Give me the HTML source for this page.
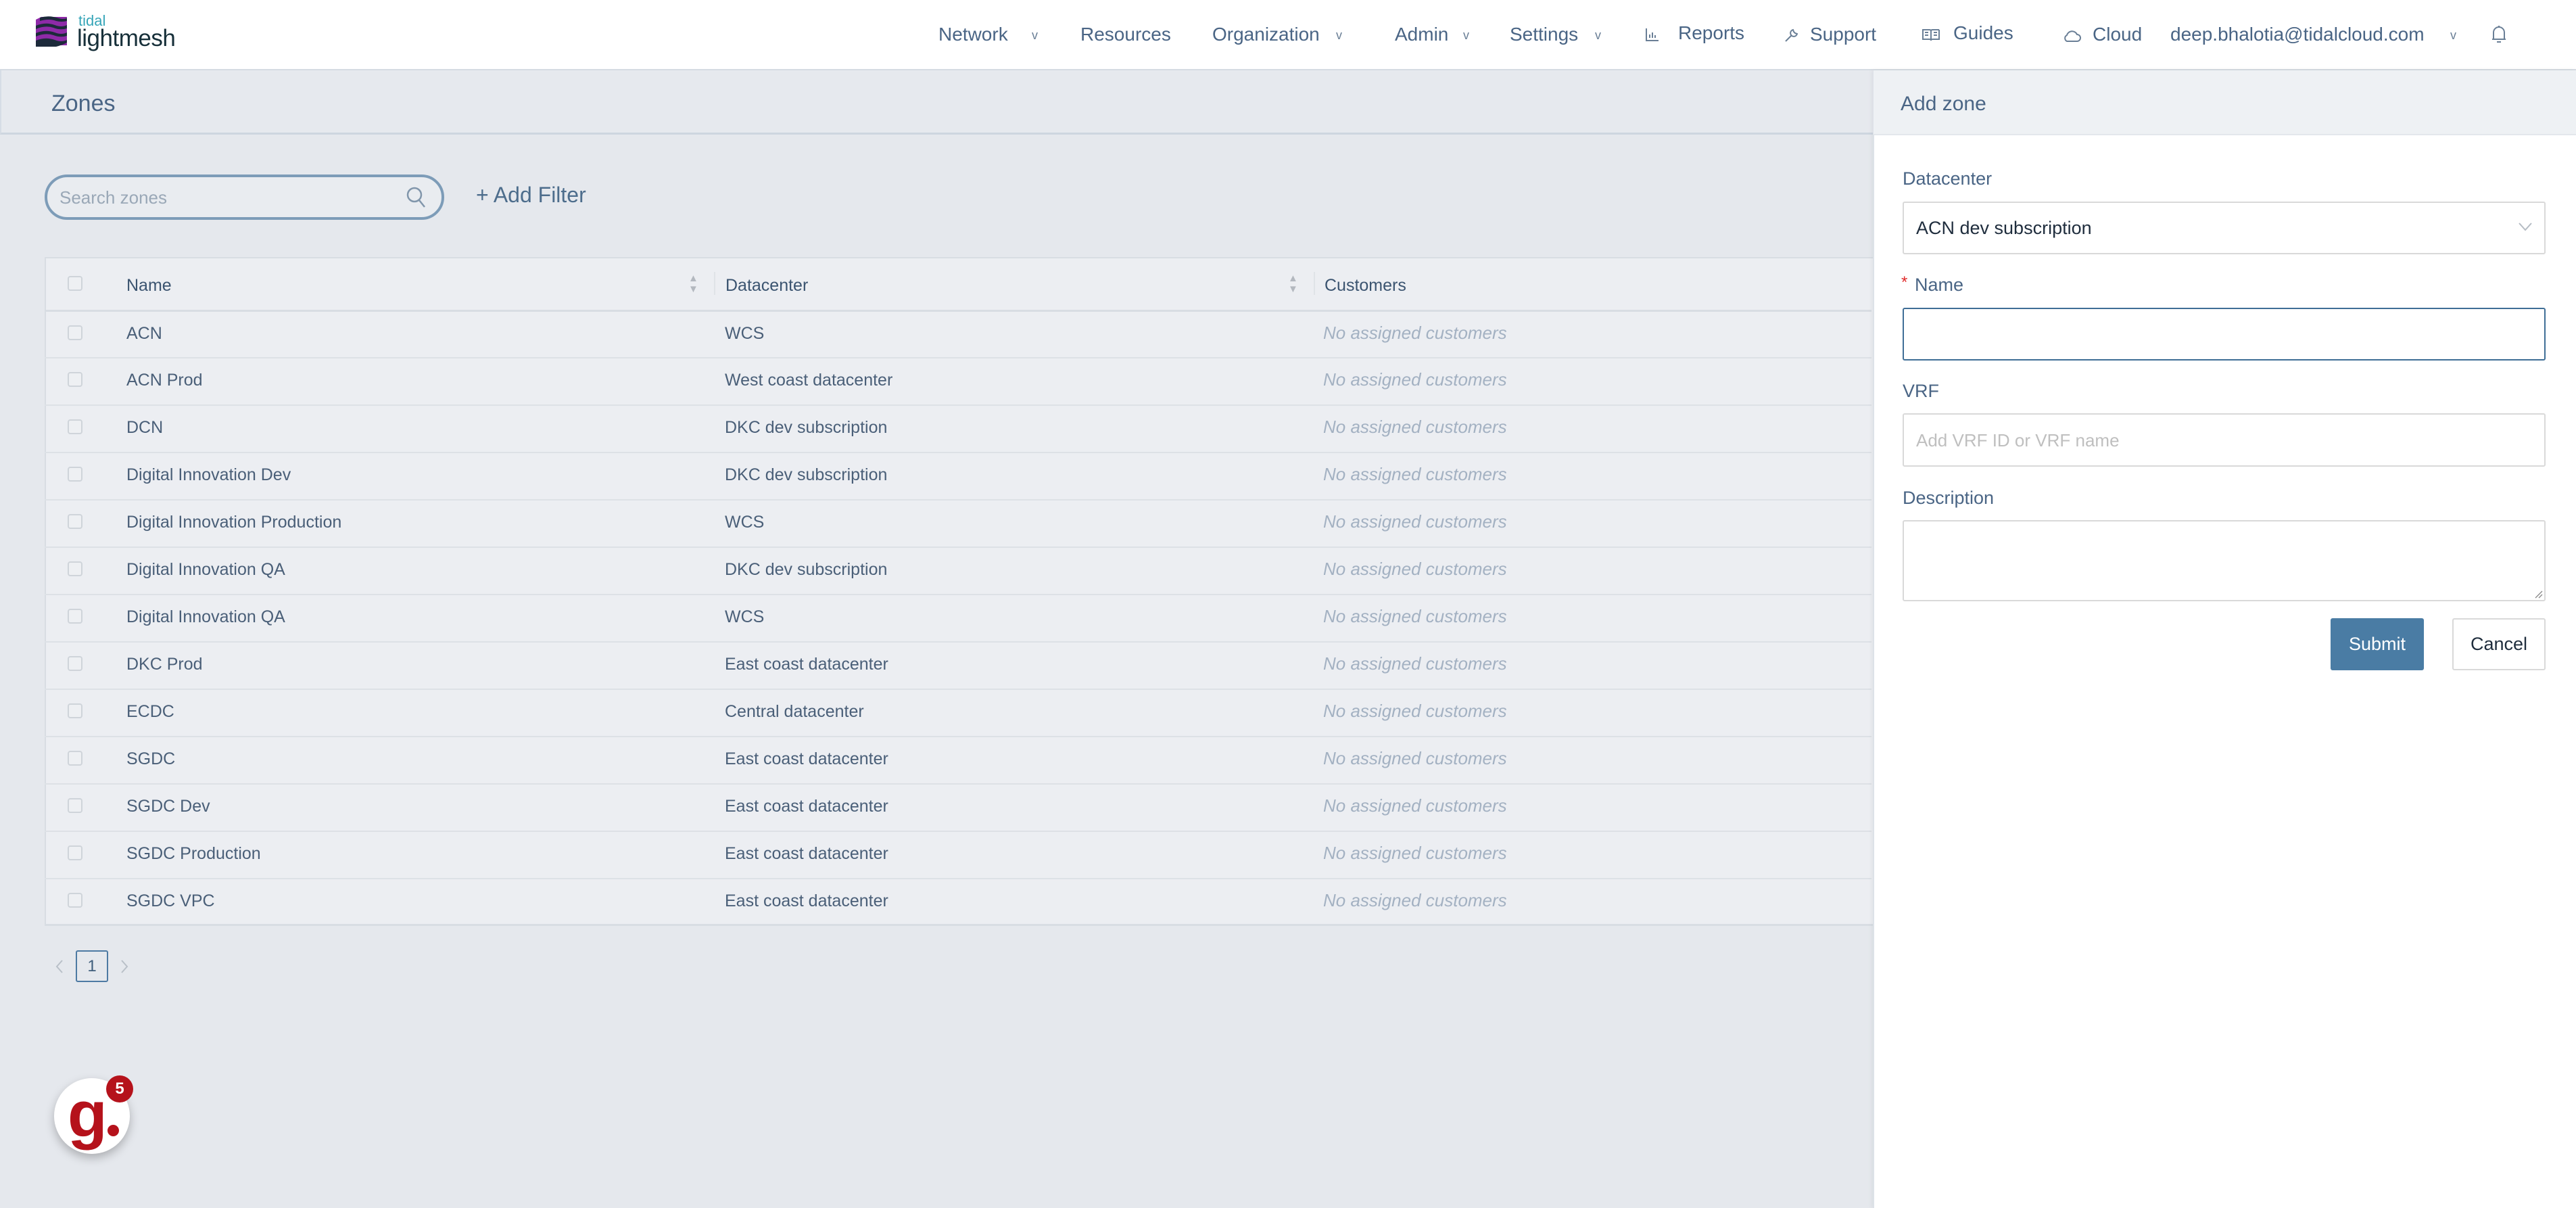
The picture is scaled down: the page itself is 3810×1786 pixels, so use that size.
<!DOCTYPE html>
<html><head><meta charset="utf-8"><style>
*{margin:0;padding:0;box-sizing:border-box}
body{width:3810px;height:1786px;background:#e5e8ed;font-family:"Liberation Sans",sans-serif;position:relative;overflow:hidden}
.a{position:absolute;white-space:nowrap}
.nav{font-size:28px;color:#4a6585;top:35px;line-height:32px}
.chev{font-size:18px;color:#6a7f96;top:42px}
.row{position:absolute;left:66px;width:2702px;height:70px;border-top:2px solid #dde1e6}
.cb{position:absolute;left:34px;top:20px;width:22px;height:22px;border:2px solid #cfd4da;border-radius:4px;background:#eef0f3}
.t{position:absolute;top:18px;font-size:25px;color:#4a5f78;line-height:28px}
.c{position:absolute;left:1891px;top:17px;font-size:26px;color:#a3b1c2;font-style:italic;line-height:28px}
.lbl{position:absolute;left:2814px;font-size:27px;color:#4a6585}
.inp{position:absolute;left:2814px;width:951px;border:2px solid #d9d9d9;background:#fff;border-radius:3px}
</style></head><body>
<!-- header -->
<div class="a" style="left:0;top:0;width:3810px;height:104px;background:#fff;border-bottom:2px solid #d5dbe2;box-shadow:0 2px 4px rgba(0,0,0,.06)"></div>
<svg class="a" style="left:53px;top:23px" width="48" height="46" viewBox="0 0 48 46">
<path d="M8 2 L46 2 L46 44 L0 44 L0 6Z" fill="#8e2aa8"/>
<path d="M6 3 Q20 -1 34 4 Q40 6 46 4 L46 8 Q38 10 30 8 Q20 4 6 8Z" fill="#1c2a3a"/>
<path d="M0 15 Q14 9 28 14 Q38 18 46 14 L46 19 Q36 22 26 18 Q14 14 0 20Z" fill="#1c2a3a"/>
<path d="M0 26 Q14 20 28 25 Q38 29 46 25 L46 30 Q36 33 26 29 Q14 25 0 31Z" fill="#1c2a3a"/>
<path d="M0 37 Q14 31 28 36 Q38 40 46 36 L46 40 Q38 44 30 46 L0 46Z" fill="#1c2a3a"/>
</svg>
<div class="a" style="left:116px;top:19px;font-size:22px;color:#36a5b8;line-height:24px">tidal</div>
<div class="a" style="left:114px;top:38px;font-size:35px;color:#17303a;line-height:38px;letter-spacing:-0.5px">lightmesh</div>

<div class="a nav" style="left:1388px">Network</div><div class="a chev" style="left:1526px">v</div>
<div class="a nav" style="left:1598px">Resources</div>
<div class="a nav" style="left:1793px">Organization</div><div class="a chev" style="left:1976px">v</div>
<div class="a nav" style="left:2063px">Admin</div><div class="a chev" style="left:2164px">v</div>
<div class="a nav" style="left:2233px">Settings</div><div class="a chev" style="left:2359px">v</div>
<svg class="a" style="left:2433px;top:40px" width="22" height="22" viewBox="0 0 22 22" fill="none" stroke="#6a7f96" stroke-width="2"><path d="M2 2V20H20M7 16V11M11 16V8M15 16V12"/></svg>
<div class="a nav" style="left:2482px;top:33px">Reports</div>
<svg class="a" style="left:2638px;top:40px" width="24" height="24" viewBox="0 0 24 24" fill="none" stroke="#6a7f96" stroke-width="2"><path d="M3 21L12 12M14 4a5 5 0 1 0 6 6l-3-1-2-2z"/></svg>
<div class="a nav" style="left:2677px">Support</div>
<svg class="a" style="left:2843px;top:42px" width="26" height="20" viewBox="0 0 26 20" fill="none" stroke="#6a7f96" stroke-width="2"><path d="M1 2H11Q13 2 13 4V18Q13 16 11 16H1ZM25 2H15Q13 2 13 4M25 2V16H15Q13 16 13 18M4 6H9M4 10H9M17 6H22M17 10H22"/></svg>
<div class="a nav" style="left:2889px;top:33px">Guides</div>
<svg class="a" style="left:3050px;top:43px" width="28" height="20" viewBox="0 0 28 20" fill="none" stroke="#6a7f96" stroke-width="2"><path d="M7 18H22a5 5 0 0 0 0-10 8 8 0 0 0-15 1 5 5 0 0 0 0 9z"/></svg>
<div class="a nav" style="left:3095px">Cloud</div>
<div class="a nav" style="left:3210px">deep.bhalotia@tidalcloud.com</div><div class="a chev" style="left:3624px">v</div>
<svg class="a" style="left:3684px;top:36px" width="24" height="30" viewBox="0 0 24 30" fill="none" stroke="#6a7f96" stroke-width="2"><path d="M4 22V12a8 8 0 0 1 16 0V22H2H22M9 26H15M12 2V4"/></svg>

<!-- title band -->
<div class="a" style="left:0;top:104px;width:2770px;height:95px;background:#e6e9ee;border-left:2px solid #d6dde5;border-bottom:3px solid #cdd6df"></div>
<div class="a" style="left:76px;top:134px;font-size:34px;color:#4a6585">Zones</div>

<!-- search -->
<div class="a" style="left:66px;top:258px;width:591px;height:67px;border:4px solid #7d9cb8;border-radius:34px;background:#e9ecf0"></div>
<div class="a" style="left:88px;top:277px;font-size:26px;color:#9aa8b7">Search zones</div>
<svg class="a" style="left:600px;top:274px" width="32" height="36" viewBox="0 0 32 36" fill="none" stroke="#8196ab" stroke-width="2.5"><circle cx="13" cy="14" r="10"/><path d="M20 22L28 32"/></svg>
<div class="a" style="left:704px;top:270px;font-size:32px;color:#4d6d8c">+ Add Filter</div>

<!-- table -->
<div class="a" style="left:66px;top:380px;width:2704px;height:988px;background:#eceef2;border:2px solid #d8dde3;border-right:none"></div>
<div class="row" style="top:380px;height:78px;border-top:none">
<div class="cb" style="top:28px"></div>
<div class="t" style="left:121px;top:28px;color:#3b5470">Name</div>
<div class="a" style="left:952px;top:24px;font-size:15px;color:#b3b8bf;line-height:16px">▲<br>▼</div>
<div class="a" style="left:990px;top:22px;width:2px;height:34px;background:#dfe3e7"></div>
<div class="t" style="left:1007px;top:28px;color:#3b5470">Datacenter</div>
<div class="a" style="left:1839px;top:24px;font-size:15px;color:#b3b8bf;line-height:16px">▲<br>▼</div>
<div class="a" style="left:1877px;top:22px;width:2px;height:34px;background:#dfe3e7"></div>
<div class="t" style="left:1893px;top:28px;color:#3b5470">Customers</div>
</div>
<div class="row" style="top:458px;border-top:3px solid #d8dde3"><div class="cb"></div><div class="t" style="left:121px">ACN</div><div class="t" style="left:1006px">WCS</div><div class="c">No assigned customers</div></div>
<div class="row" style="top:528px"><div class="cb"></div><div class="t" style="left:121px">ACN Prod</div><div class="t" style="left:1006px">West coast datacenter</div><div class="c">No assigned customers</div></div>
<div class="row" style="top:598px"><div class="cb"></div><div class="t" style="left:121px">DCN</div><div class="t" style="left:1006px">DKC dev subscription</div><div class="c">No assigned customers</div></div>
<div class="row" style="top:668px"><div class="cb"></div><div class="t" style="left:121px">Digital Innovation Dev</div><div class="t" style="left:1006px">DKC dev subscription</div><div class="c">No assigned customers</div></div>
<div class="row" style="top:738px"><div class="cb"></div><div class="t" style="left:121px">Digital Innovation Production</div><div class="t" style="left:1006px">WCS</div><div class="c">No assigned customers</div></div>
<div class="row" style="top:808px"><div class="cb"></div><div class="t" style="left:121px">Digital Innovation QA</div><div class="t" style="left:1006px">DKC dev subscription</div><div class="c">No assigned customers</div></div>
<div class="row" style="top:878px"><div class="cb"></div><div class="t" style="left:121px">Digital Innovation QA</div><div class="t" style="left:1006px">WCS</div><div class="c">No assigned customers</div></div>
<div class="row" style="top:948px"><div class="cb"></div><div class="t" style="left:121px">DKC Prod</div><div class="t" style="left:1006px">East coast datacenter</div><div class="c">No assigned customers</div></div>
<div class="row" style="top:1018px"><div class="cb"></div><div class="t" style="left:121px">ECDC</div><div class="t" style="left:1006px">Central datacenter</div><div class="c">No assigned customers</div></div>
<div class="row" style="top:1088px"><div class="cb"></div><div class="t" style="left:121px">SGDC</div><div class="t" style="left:1006px">East coast datacenter</div><div class="c">No assigned customers</div></div>
<div class="row" style="top:1158px"><div class="cb"></div><div class="t" style="left:121px">SGDC Dev</div><div class="t" style="left:1006px">East coast datacenter</div><div class="c">No assigned customers</div></div>
<div class="row" style="top:1228px"><div class="cb"></div><div class="t" style="left:121px">SGDC Production</div><div class="t" style="left:1006px">East coast datacenter</div><div class="c">No assigned customers</div></div>
<div class="row" style="top:1298px"><div class="cb"></div><div class="t" style="left:121px">SGDC VPC</div><div class="t" style="left:1006px">East coast datacenter</div><div class="c">No assigned customers</div></div>
<div class="a" style="left:66px;top:1366px;width:2704px;height:3px;background:#d8dde3"></div>

<!-- pagination -->
<svg class="a" style="left:80px;top:1418px" width="16" height="22" viewBox="0 0 16 22" fill="none" stroke="#b9c0c8" stroke-width="2"><path d="M12 2L4 11L12 20"/></svg>
<div class="a" style="left:112px;top:1405px;width:48px;height:47px;border:2px solid #4d7aa3;border-radius:3px;font-size:24px;color:#3f5e7c;text-align:center;line-height:43px">1</div>
<svg class="a" style="left:176px;top:1418px" width="16" height="22" viewBox="0 0 16 22" fill="none" stroke="#b9c0c8" stroke-width="2"><path d="M4 2L12 11L4 20"/></svg>

<!-- g badge -->
<div class="a" style="left:80px;top:1594px;width:112px;height:112px;border-radius:50%;background:#fff;box-shadow:0 6px 14px rgba(0,0,0,.25)"></div>
<div class="a" style="left:100px;top:1600px;font-size:96px;color:#b5121b;font-weight:bold;line-height:96px">g</div>
<div class="a" style="left:159px;top:1663px;width:17px;height:17px;border-radius:50%;background:#b5121b"></div>
<div class="a" style="left:157px;top:1590px;width:40px;height:40px;border-radius:50%;background:#b5121b;color:#fff;font-size:24px;font-weight:bold;text-align:center;line-height:40px">5</div>

<!-- side panel -->
<div class="a" style="left:2770px;top:104px;width:1040px;height:1682px;background:#fff;border-left:2px solid #dde2e8;box-shadow:-2px 0 6px rgba(0,0,0,.05)"></div>
<div class="a" style="left:2771px;top:104px;width:1039px;height:96px;background:#eef1f4;border-bottom:2px solid #e3e7ec"></div>
<div class="a" style="left:2811px;top:137px;font-size:30px;color:#4a6585">Add zone</div>

<div class="lbl" style="top:249px">Datacenter</div>
<div class="inp" style="top:298px;height:78px"></div>
<div class="a" style="left:2834px;top:322px;font-size:27px;color:#1f2d3d">ACN dev subscription</div>
<svg class="a" style="left:3724px;top:328px" width="22" height="14" viewBox="0 0 22 14" fill="none" stroke="#b5bcc4" stroke-width="2"><path d="M2 2L11 12L20 2"/></svg>

<div class="a" style="left:2812px;top:404px;font-size:24px;color:#e02b2b">*</div>
<div class="lbl" style="left:2832px;top:406px">Name</div>
<div class="inp" style="top:455px;height:78px;border-color:#3f6e96"></div>

<div class="lbl" style="top:563px">VRF</div>
<div class="inp" style="top:611px;height:79px"></div>
<div class="a" style="left:2834px;top:636px;font-size:26px;color:#bfbfbf">Add VRF ID or VRF name</div>

<div class="lbl" style="top:721px">Description</div>
<div class="inp" style="top:769px;height:120px"></div>
<svg class="a" style="left:3749px;top:873px" width="12" height="12" viewBox="0 0 12 12" stroke="#888" stroke-width="1.3"><path d="M1 11L11 1M6 11L11 6"/></svg>

<div class="a" style="left:3447px;top:914px;width:138px;height:77px;background:#4a7ca4;border-radius:3px;color:#fff;font-size:27px;text-align:center;line-height:77px">Submit</div>
<div class="a" style="left:3627px;top:914px;width:138px;height:77px;background:#fff;border:2px solid #d9d9d9;border-radius:3px;color:#1f2d3d;font-size:27px;text-align:center;line-height:73px">Cancel</div>
</body></html>
